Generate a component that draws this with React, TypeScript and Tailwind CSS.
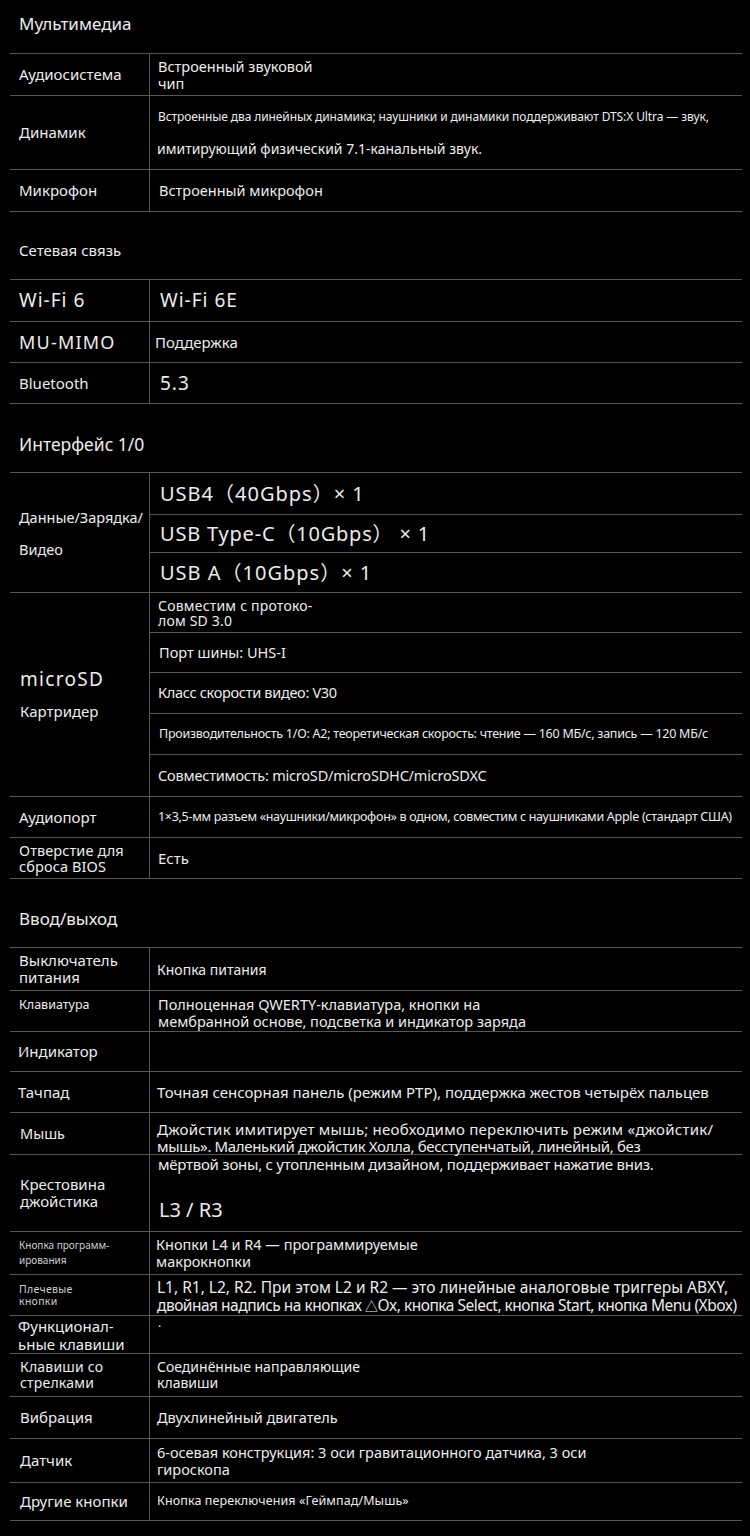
import React from "react";

type RowProps = {
  h: string;
  label: React.ReactNode;
  lc?: string;
  lp?: string;
  la?: string;
  vc?: string;
  vp?: string;
  va?: string;
  children?: React.ReactNode;
};

function Row({
  h,
  label,
  lc = "",
  lp = "pl-[9px]",
  la = "items-center",
  vc = "",
  vp = "pl-[8px]",
  va = "items-center",
  children,
}: RowProps) {
  return (
    <div className={"flex border-b border-[#575757] " + h}>
      <div className={"flex w-[140px] shrink-0 whitespace-nowrap border-r border-[#575757] " + la + " " + lp + " " + lc}>
        {label}
      </div>
      <div className={"flex min-w-0 flex-1 whitespace-nowrap " + va + " " + vp + " " + vc}>{children}</div>
    </div>
  );
}

type GroupProps = { h: string; label: React.ReactNode; lc?: string; lp?: string; children: React.ReactNode };

function Group({ h, label, lc = "", lp = "pl-[9px]", children }: GroupProps) {
  return (
    <div className={"flex border-b border-[#575757] " + h}>
      <div className={"flex w-[140px] shrink-0 flex-col justify-center whitespace-nowrap border-r border-[#575757] " + lp + " " + lc}>
        {label}
      </div>
      <div className="flex min-w-0 flex-1 flex-col">{children}</div>
    </div>
  );
}

function Sub({ cls, children }: { cls: string; children: React.ReactNode }) {
  return <div className={"flex items-center whitespace-nowrap " + cls}>{children}</div>;
}

function Title({ h, cls, children }: { h: string; cls: string; children: React.ReactNode }) {
  return <div className={"flex items-end pl-[9px] leading-[24px] " + h + " " + cls}>{children}</div>;
}

function Lines({ items, cls }: { items: string[]; cls: string }) {
  return (
    <div className="flex flex-col">
      {items.map((t) => (
        <span key={t} className={cls}>
          {t}
        </span>
      ))}
    </div>
  );
}

export default function App() {
  return (
    <div className="min-h-[1536px] w-[750px] bg-black pl-[10px] font-['Noto_Sans','Noto_Sans_CJK_SC',sans-serif] text-[#ececec]">
      {/* Мультимедиа */}
      <Title h="h-[53px]" cls="pb-[17px] text-[17px]">Мультимедиа</Title>
      <div className="w-[732px] border-t border-[#575757]">
        <Row h="h-[42px]" label="Аудиосистема" lc="text-[15px]" vc="text-[14.5px]">
          <Lines items={["Встроенный звуковой", "чип"]} cls="leading-[17px]" />
        </Row>
        <Row h="h-[74px]" label="Динамик" lc="text-[15px]" vp="pl-[7px]">
          <div className="flex flex-col">
            <span className="pl-[1px] text-[12px] leading-[32px] tracking-[-0.1px]">
              Встроенные два линейных динамика; наушники и динамики поддерживают DTS:X Ultra — звук,
            </span>
            <span className="text-[14px] leading-[32px]">имитирующий физический 7.1-канальный звук.</span>
          </div>
        </Row>
        <Row h="h-[42px]" label="Микрофон" lc="text-[15px]" vc="text-[14.5px]" vp="pl-[9px]">
          Встроенный микрофон
        </Row>
      </div>

      {/* Сетевая связь */}
      <Title h="h-[67px]" cls="pb-[17px] text-[15px]">Сетевая связь</Title>
      <div className="w-[732px] border-t border-[#575757]">
        <Row h="h-[42px]" label="Wi-Fi 6" lc="text-[19px] tracking-[1px]" vc="text-[19px] tracking-[1px]" vp="pl-[10px]">
          Wi-Fi 6E
        </Row>
        <Row h="h-[41px]" label="MU-MIMO" lc="text-[18px] tracking-[1.2px]" vc="text-[15px]" vp="pl-[5px]">
          Поддержка
        </Row>
        <Row h="h-[41px]" label="Bluetooth" lc="text-[15px]" vc="text-[19px] tracking-[1px]" vp="pl-[10px]">
          5.3
        </Row>
      </div>

      {/* Интерфейс */}
      <Title h="h-[68px]" cls="pb-[16px] text-[17.5px]">Интерфейс 1/0</Title>
      <div className="w-[732px] border-t border-[#575757]">
        <Group
          h="h-[120px]"
          lc="text-[14.5px] leading-[32px]"
          label={
            <>
              <span>Данные/Зарядка/</span>
              <span>Видео</span>
            </>
          }
        >
          <Sub cls="h-[42px] border-b border-[#575757] pl-[10px] text-[20px] tracking-[1px]">USB4（40Gbps）× 1</Sub>
          <Sub cls="h-[38px] border-b border-[#575757] pl-[10px] text-[20px] tracking-[0.8px]">USB Type-C（10Gbps） × 1</Sub>
          <Sub cls="flex-1 pl-[10px] text-[20px] tracking-[1px]">USB A（10Gbps）× 1</Sub>
        </Group>
        <Group
          h="h-[204px]"
          lp="pl-[10px]"
          label={
            <>
              <span className="text-[19px] leading-[32px] tracking-[1.3px]">microSD</span>
              <span className="text-[15px] leading-[32px]">Картридер</span>
            </>
          }
        >
          <Sub cls="h-[40px] border-b border-[#575757] pl-[8px] text-[14px] tracking-[0.2px]">
            <Lines items={["Совместим с протоко-", "лом SD 3.0"]} cls="leading-[15px]" />
          </Sub>
          <Sub cls="h-[40px] border-b border-[#575757] pl-[9px] text-[14.5px]">Порт шины: UHS-I</Sub>
          <Sub cls="h-[41px] border-b border-[#575757] pl-[8px] text-[14.5px] tracking-[-0.3px]">Класс скорости видео: V30</Sub>
          <Sub cls="h-[41px] border-b border-[#575757] pl-[9px] text-[12.5px] tracking-[-0.25px]">
            Производительность 1/О: А2; теоретическая скорость: чтение — 160 МБ/с, запись — 120 МБ/с
          </Sub>
          <Sub cls="flex-1 pl-[8px] text-[14.5px] tracking-[-0.2px]">Совместимость: microSD/microSDHC/microSDXC</Sub>
        </Group>
        <Row h="h-[41px]" label="Аудиопорт" lc="text-[15px]" vc="text-[12.5px] tracking-[-0.3px]">
          1×3,5-мм разъем «наушники/микрофон» в одном, совместим с наушниками Apple (стандарт США)
        </Row>
        <Row
          h="h-[41px]"
          label={<Lines items={["Отверстие для", "сброса BIOS"]} cls="leading-[16px]" />}
          lc="text-[14.5px] tracking-[0.1px]"
          vc="text-[15px]"
        >
          Есть
        </Row>
      </div>

      {/* Ввод/выход */}
      <Title h="h-[68px]" cls="pb-[16px] text-[17px]">Ввод/выход</Title>
      <div className="w-[732px] border-t border-[#575757]">
        <Row
          h="h-[43px]"
          label={<Lines items={["Выключатель", "питания"]} cls="leading-[17px]" />}
          lc="text-[15px]"
          vc="text-[14px]"
          vp="pl-[7px]"
        >
          Кнопка питания
        </Row>
        <Row
          h="h-[41px]"
          label="Клавиатура"
          la="items-start"
          lc="pt-[5px] text-[12.5px] leading-[17px]"
          vc="pt-[3px] text-[14.5px]"
        >
          <Lines
            items={["Полноценная QWERTY-клавиатура, кнопки на", "мембранной основе, подсветка и индикатор заряда"]}
            cls="leading-[17px]"
          />
        </Row>
        <Row h="h-[40px]" label="Индикатор" lc="text-[15px]" lp="pl-[8px]">
          {""}
        </Row>
        <Row h="h-[41px]" label="Тачпад" lc="text-[15px]" lp="pl-[8px]" vc="text-[15px]" vp="pl-[7px]">
          Точная сенсорная панель (режим PTP), поддержка жестов четырёх пальцев
        </Row>
        <Row
          h="h-[42px]"
          label="Мышь"
          lc="text-[14.5px]"
          lp="pl-[10px]"
          va="items-start"
          vp="pl-[7px]"
          vc="pt-[8px] text-[15px] leading-[17px]"
        >
          <div className="flex flex-col">
            <span className="tracking-[0.25px]">Джойстик имитирует мышь; необходимо переключить режим «джойстик/</span>
            <span className="tracking-[-0.35px]">мышь». Маленький джойстик Холла, бесступенчатый, линейный, без</span>
          </div>
        </Row>
        <Row
          h="h-[77px]"
          label={<Lines items={["Крестовина", "джойстика"]} cls="leading-[17px]" />}
          lc="text-[15px]"
          lp="pl-[10px]"
          va="items-start"
          vp="pl-[8px]"
          vc="flex-col justify-between pt-[1px] pb-[7px]"
        >
          <span className="text-[15px] leading-[17px] tracking-[-0.25px]">
            мёртвой зоны, с утопленным дизайном, поддерживает нажатие вниз.
          </span>
          <span className="pl-[1px] text-[20px] leading-[28px]">L3 / R3</span>
        </Row>
        <Row
          h="h-[43px]"
          label={<Lines items={["Кнопка программ-", "ирования"]} cls="leading-[15px]" />}
          lc="text-[10px] text-[#cfcfcf]"
          vc="text-[14.5px]"
          vp="pl-[6px]"
        >
          <Lines items={["Кнопки L4 и R4 — программируемые", "макрокнопки"]} cls="leading-[17px]" />
        </Row>
        <Row
          h="h-[41px]"
          label={<Lines items={["Плечевые", "кнопки"]} cls="leading-[12px]" />}
          lc="text-[10.5px] tracking-[0.3px] text-[#cfcfcf]"
          vc="pt-[3px] text-[15.5px] leading-[18px]"
          vp="pl-[7px]"
        >
          <div className="flex flex-col">
            <span>L1, R1, L2, R2. При этом L2 и R2 — это линейные аналоговые триггеры ABXY,</span>
            <span className="tracking-[-0.5px]">
              двойная надпись на кнопках <span className="text-[13px]">△</span>Ox, кнопка Select, кнопка Start, кнопка Menu (Xbox)
            </span>
          </div>
        </Row>
        <Row
          h="h-[38px]"
          label={<Lines items={["Функционал-", "ьные клавиши"]} cls="leading-[18px]" />}
          lc="text-[15px]"
          lp="pl-[8px]"
          va="items-start"
          vc="pt-[1px] text-[12px] leading-[12px]"
        >
          .
        </Row>
        <Row
          h="h-[43px]"
          label={<Lines items={["Клавиши со", "стрелками"]} cls="leading-[16px]" />}
          lc="text-[14px] tracking-[0.2px]"
          lp="pl-[10px]"
          vc="text-[14px]"
          vp="pl-[7px]"
        >
          <Lines items={["Соединённые направляющие", "клавиши"]} cls="leading-[16px]" />
        </Row>
        <Row h="h-[42px]" label="Вибрация" lc="text-[15px]" lp="pl-[10px]" vc="text-[14.5px]" vp="pl-[7px]">
          Двухлинейный двигатель
        </Row>
        <Row h="h-[44px]" label="Датчик" lc="text-[15px]" lp="pl-[10px]" vc="text-[14.5px]" vp="pl-[7px]">
          <Lines items={["6-осевая конструкция: 3 оси гравитационного датчика, 3 оси", "гироскопа"]} cls="leading-[17px]" />
        </Row>
        <Row h="h-[38px]" label="Другие кнопки" lc="text-[15px]" lp="pl-[10px]" vc="text-[12.5px] tracking-[0.1px]" vp="pl-[7px]">
          Кнопка переключения «Геймпад/Мышь»
        </Row>
      </div>
    </div>
  );
}
